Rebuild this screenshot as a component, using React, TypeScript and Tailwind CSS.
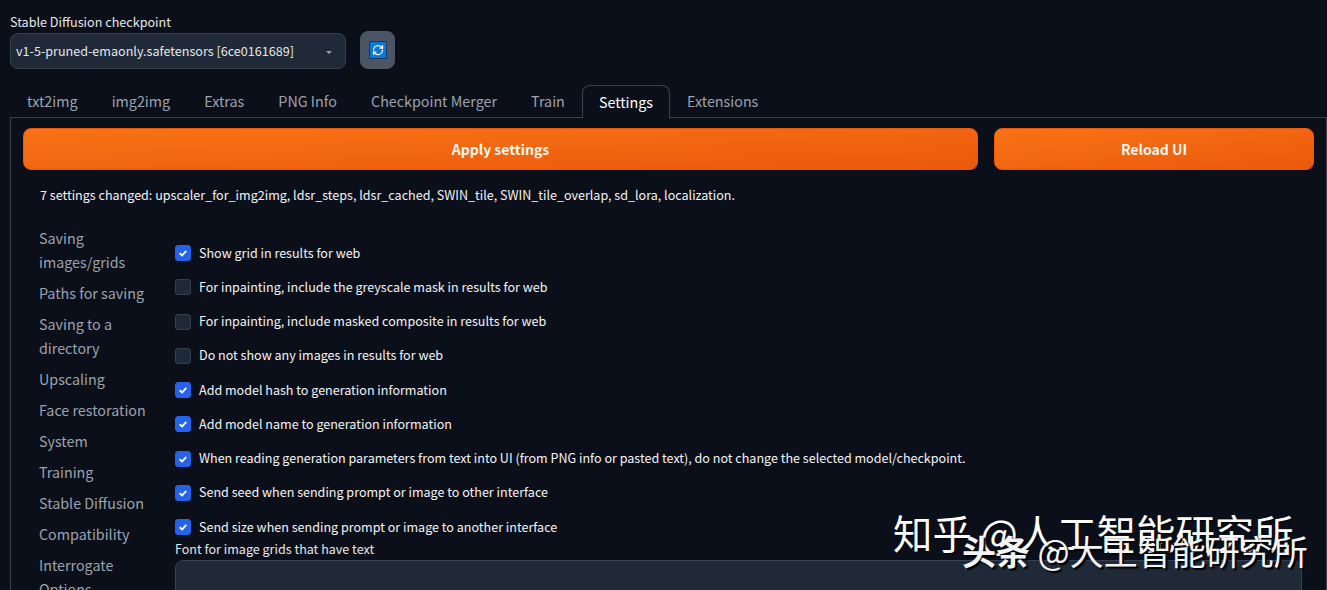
import { RefreshCw } from 'lucide-react';

const TABS = ['txt2img', 'img2img', 'Extras', 'PNG Info', 'Checkpoint Merger', 'Train', 'Settings', 'Extensions'];

const SECTIONS = [
  { label: 'Saving images/grids', cls: 'w-[100px]' },
  { label: 'Paths for saving', cls: '' },
  { label: 'Saving to a directory', cls: 'w-[90px]' },
  { label: 'Upscaling', cls: '' },
  { label: 'Face restoration', cls: '' },
  { label: 'System', cls: '' },
  { label: 'Training', cls: '' },
  { label: 'Stable Diffusion', cls: '' },
  { label: 'Compatibility', cls: '' },
  { label: 'Interrogate Options', cls: 'w-[90px]' },
];

const OPTIONS = [
  { label: 'Show grid in results for web', on: true },
  { label: 'For inpainting, include the greyscale mask in results for web', on: false },
  { label: 'For inpainting, include masked composite in results for web', on: false },
  { label: 'Do not show any images in results for web', on: false },
  { label: 'Add model hash to generation information', on: true },
  { label: 'Add model name to generation information', on: true },
  {
    label:
      'When reading generation parameters from text into UI (from PNG info or pasted text), do not change the selected model/checkpoint.',
    on: true,
  },
  { label: 'Send seed when sending prompt or image to other interface', on: true },
  { label: 'Send size when sending prompt or image to another interface', on: true },
];

const Checkbox = ({ on }: { on: boolean }) => (
  <span
    className={`flex h-4 w-4 shrink-0 items-center justify-center rounded-[3px] border ${
      on ? 'border-[#2563eb] bg-[#2563eb]' : 'border-[#374151] bg-[#1f2937]'
    }`}
  >
    {on && (
      <svg viewBox="0 0 16 16" className="h-4 w-4" fill="none">
        <path d="M4.2 8.3 7 10.8 11.8 5.6" stroke="white" strokeWidth="2" />
      </svg>
    )}
  </span>
);

const Primary = ({ label, className }: { label: string; className: string }) => (
  <button
    className={`flex h-[42px] items-center justify-center rounded-lg border border-[#ea580c] bg-gradient-to-br from-[#f97316] to-[#ea580c] text-[14px] font-semibold text-[#fff7ed] ${className}`}
  >
    {label}
  </button>
);

export default function App() {
  return (
    <div
      className="relative h-[590px] overflow-hidden bg-[#0b0f19] text-[#e5e7eb]"
      style={{ fontFamily: '"Noto Sans CJK SC", "Noto Sans", sans-serif' }}
    >
      <div className="pl-[10px] pt-[13px]">
        <div className="text-[12.6px] leading-[17px] text-[#e5e7eb]">Stable Diffusion checkpoint</div>
        <div className="flex items-end gap-[14px]">
          <div className="mt-[3px] flex h-9 w-[336px] items-center justify-between rounded-lg border border-[#374151] bg-[#1f2937] pl-[5px] pr-[13px] text-[12.58px]">
            <span className="whitespace-nowrap">v1-5-pruned-emaonly.safetensors [6ce0161689]</span>
            <span className="mt-[2px] h-0 w-0 border-x-[3px] border-t-[3px] border-x-transparent border-t-[#9ca3af]" />
          </div>
          <button className="flex h-[38px] w-[35px] items-center justify-center rounded-lg border border-[#4b5563] bg-[#4b5563]">
            <span className="flex h-[18px] w-[18px] items-center justify-center border border-[#12395f] bg-[#0b78d6]">
              <RefreshCw size={12} strokeWidth={2.5} className="text-white" />
            </span>
          </button>
        </div>

        <div className="mt-[15px] flex h-[33px] items-end">
          {TABS.map((tab) =>
            tab === 'Settings' ? (
              <div
                key={tab}
                className="relative z-10 -mb-px flex h-[33px] items-center rounded-t-lg border border-b-0 border-[#374151] bg-[#0b0f19] px-4 text-[14.3px] text-white"
              >
                {tab}
              </div>
            ) : (
              <div key={tab} className="flex h-[33px] items-center px-[17.08px] pt-[1px] text-[14.3px] text-[#9ca3af]">
                {tab}
              </div>
            ),
          )}
        </div>

        <div className="rounded-bl-lg border-x border-t border-[#374151] pl-3 pr-3 pt-[10px]">
          <div className="flex gap-4">
            <Primary label="Apply settings" className="flex-1" />
            <Primary label="Reload UI" className="w-[320px]" />
          </div>
          <div className="mt-[15px] pl-[17px] text-[12.55px] leading-[19px] text-[#f3f4f6]">
            7 settings changed: upscaler_for_img2img, ldsr_steps, ldsr_cached, SWIN_tile, SWIN_tile_overlap, sd_lora,
            localization.
          </div>

          <div className="mt-[22px] flex">
            <nav className="w-[152px] shrink-0 pl-4 text-[14.3px] leading-6 text-[#9ca3af]">
              {SECTIONS.map((s) => (
                <div key={s.label} className={`mb-[7px] ${s.cls}`}>
                  {s.label}
                </div>
              ))}
            </nav>
            <div className="min-w-0 flex-1 pt-[17px] pr-[12px]">
              <div className="flex flex-col gap-[14.25px]">
                {OPTIONS.map((o) => (
                  <label key={o.label} className="flex h-5 items-center gap-2 text-[12.55px] text-[#f3f4f6]">
                    <Checkbox on={o.on} />
                    {o.label}
                  </label>
                ))}
              </div>
              <div className="mt-[3px] text-[12.55px] leading-[18px] text-[#e5e7eb]">Font for image grids that have text</div>
              <div className="mt-[2px] h-[60px] rounded-lg border border-[#374151] bg-[#1f2937]" />
            </div>
          </div>
        </div>
      </div>

      <div className="pointer-events-none absolute left-[893px] top-[507px] whitespace-nowrap text-[39.4px] leading-[50px] text-white [text-shadow:1px_1px_1px_#000]">
        知乎 @人工智能研究所
      </div>
      <div className="pointer-events-none absolute left-[962px] top-[528px] whitespace-nowrap text-[34px] leading-[46px] text-[#f3f4f6] [text-shadow:2px_2px_1px_#000]">
        <span className="font-bold">头条</span> @大王智能研究所
      </div>
    </div>
  );
}
